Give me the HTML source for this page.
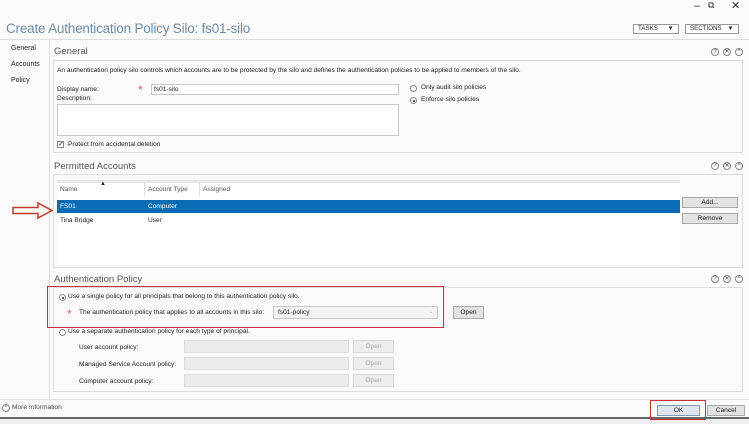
<!DOCTYPE html>
<html><head><meta charset="utf-8"><style>
*{margin:0;padding:0;box-sizing:border-box}
body{width:749px;height:424px;background:#fbfbfb;font-family:"Liberation Sans",sans-serif;font-size:6.6px;color:#222;position:relative;overflow:hidden}
.a{position:absolute;white-space:nowrap}
.box{position:absolute;border:1px solid #dcdcdc;background:#fafafa}
.h{position:absolute;font-size:9.5px;color:#555;white-space:nowrap}
.inp{position:absolute;border:1px solid #c8c8c8;background:#fff}
.btn{position:absolute;border:1px solid #aaa;background:#e2e2e2;text-align:center;font-size:6.6px;line-height:10px}
.dis{background:#ededed;border-color:#d8d8d8;color:#aaa}
.ic{position:absolute;width:8px;height:8px;border:1px solid #888;border-radius:50%;font-size:6px;line-height:6px;text-align:center;color:#444}
.rad{position:absolute;width:7px;height:7px;border:1px solid #888;border-radius:50%;background:#fff}
.rad.on::after{content:"";position:absolute;left:1.5px;top:1.5px;width:2px;height:2px;border-radius:50%;background:#222}
.star{position:absolute;color:#e06070;font-size:12px;line-height:10px}
</style></head><body>
<div class="a" style="left:694px;top:0;font-size:11px;color:#333">–</div>
<div class="a" style="left:708px;top:0;font-size:9px;color:#333">⧉</div>
<div class="a" style="left:731px;top:-1px;font-size:11px;color:#333">✕</div>
<div class="a" style="left:6px;top:21px;font-size:13.5px;color:#6f8ba3;letter-spacing:-0.2px">Create Authentication Policy Silo: fs01-silo</div>
<div class="btn" style="left:633px;top:24px;width:46px;height:10px;background:#fff;border-color:#999;text-align:left;padding-left:4px;font-size:6.2px;line-height:8px">TASKS <span style="margin-left:8px">▼</span></div>
<div class="btn" style="left:685px;top:24px;width:54px;height:10px;background:#fff;border-color:#999;text-align:left;padding-left:4px;font-size:6.2px;line-height:8px">SECTIONS <span style="margin-left:4px">▼</span></div>
<div class="a" style="left:0;top:39px;width:749px;height:1px;background:#ddd"></div>
<div class="a" style="left:49px;top:40px;width:1px;height:360px;background:#ddd"></div>
<div class="a" style="left:11px;top:45px;font-size:7px">General</div>
<div class="a" style="left:11px;top:61px;font-size:7px">Accounts</div>
<div class="a" style="left:11px;top:77px;font-size:7px">Policy</div>

<div class="h" style="left:54px;top:46px">General</div>
<div class="ic" style="left:711px;top:48px">?</div><div class="ic" style="left:723px;top:48px">✕</div><div class="ic" style="left:735px;top:48px">^</div>
<div class="box" style="left:53px;top:60px;width:690px;height:93px"></div>
<div class="a" style="left:57px;top:67px">An authentication policy silo controls which accounts are to be protected by the silo and defines the authentication policies to be applied to members of the silo.</div>
<div class="a" style="left:57px;top:86px">Display name:</div>
<div class="star" style="left:138px;top:85px">*</div>
<div class="inp" style="left:151px;top:84px;width:248px;height:11px;padding-left:2px;line-height:9px">fs01-silo</div>
<div class="a" style="left:57px;top:95px">Description:</div>
<div class="inp" style="left:57px;top:104px;width:342px;height:32px"></div>
<div class="a" style="left:57px;top:141px;width:7px;height:7px;border:1px solid #888;background:#fff;font-size:7px;line-height:5px">✓</div>
<div class="a" style="left:68px;top:141px">Protect from accidental deletion</div>
<div class="rad" style="left:410px;top:85px"></div><div class="a" style="left:421px;top:84px">Only audit silo policies</div>
<div class="rad on" style="left:410px;top:97px"></div><div class="a" style="left:421px;top:96px">Enforce silo policies</div>

<div class="h" style="left:54px;top:161px">Permitted Accounts</div>
<div class="ic" style="left:711px;top:162px">?</div><div class="ic" style="left:723px;top:162px">✕</div><div class="ic" style="left:735px;top:162px">^</div>
<div class="box" style="left:53px;top:174px;width:690px;height:94px"></div>
<div class="a" style="left:57px;top:180px;width:623px;height:85px;background:#fff"></div>
<div class="a" style="left:57px;top:180px;width:623px;height:3px;background:#e8e8e8"></div>
<div class="a" style="left:100px;top:181px;font-size:6px">▲</div>
<div class="a" style="left:60px;top:186px;color:#555">Name</div>
<div class="a" style="left:144px;top:183px;width:1px;height:13px;background:#ddd"></div>
<div class="a" style="left:148px;top:186px;color:#555">Account Type</div>
<div class="a" style="left:199px;top:183px;width:1px;height:13px;background:#ddd"></div>
<div class="a" style="left:203px;top:186px;color:#555">Assigned</div>
<div class="a" style="left:57px;top:200px;width:623px;height:13px;background:#0a6cb5"></div>
<div class="a" style="left:60px;top:203px;color:#fff">FS01</div>
<div class="a" style="left:148px;top:203px;color:#fff">Computer</div>
<div class="a" style="left:60px;top:217px">Tina Bridge</div>
<div class="a" style="left:148px;top:217px">User</div>
<div class="btn" style="left:682px;top:197px;width:56px;height:11px">Add...</div>
<div class="btn" style="left:682px;top:213px;width:56px;height:11px">Remove</div>
<svg class="a" style="left:12px;top:202px" width="42" height="17"><path d="M1 5.5H26V1L40 8.5L26 16V11.5H1Z" fill="none" stroke="#c0392b" stroke-width="1.5"/></svg>

<div class="h" style="left:54px;top:274px">Authentication Policy</div>
<div class="ic" style="left:711px;top:275px">?</div><div class="ic" style="left:723px;top:275px">✕</div><div class="ic" style="left:735px;top:275px">^</div>
<div class="box" style="left:53px;top:287px;width:690px;height:105px"></div>
<div class="a" style="left:47px;top:286px;width:397px;height:42px;border:1.5px solid #c8303c"></div>
<div class="rad on" style="left:59px;top:294px"></div><div class="a" style="left:68px;top:293px">Use a single policy for all principals that belong to this authentication policy silo.</div>
<div class="star" style="left:67px;top:309px">*</div>
<div class="a" style="left:79px;top:309px">The authentication policy that applies to all accounts in this silo:</div>
<div class="inp" style="left:273px;top:306px;width:165px;height:13px;background:#f3f3f3;padding-left:4px;line-height:11px">fs01-policy<span style="position:absolute;right:4px;color:#999;font-size:5px">⌄</span></div>
<div class="btn" style="left:453px;top:306px;width:31px;height:13px;line-height:11px">Open</div>
<div class="rad" style="left:59px;top:329px"></div><div class="a" style="left:68px;top:328px">Use a separate authentication policy for each type of principal.</div>
<div class="a" style="left:79px;top:344px">User account policy:</div>
<div class="a" style="left:79px;top:361px">Managed Service Account policy:</div>
<div class="a" style="left:79px;top:378px">Computer account policy:</div>
<div class="inp" style="left:184px;top:340px;width:165px;height:13px;background:#ebebeb;border-color:#ddd"></div>
<div class="inp" style="left:184px;top:357px;width:165px;height:13px;background:#ebebeb;border-color:#ddd"></div>
<div class="inp" style="left:184px;top:374px;width:165px;height:13px;background:#ebebeb;border-color:#ddd"></div>
<div class="btn dis" style="left:353px;top:340px;width:41px;height:13px;line-height:11px">Open</div>
<div class="btn dis" style="left:353px;top:357px;width:41px;height:13px;line-height:11px">Open</div>
<div class="btn dis" style="left:353px;top:374px;width:41px;height:13px;line-height:11px">Open</div>

<div class="a" style="left:0;top:399px;width:749px;height:1px;background:#e2e2e2"></div>
<div class="ic" style="left:2px;top:404px;width:8px;height:8px;font-size:5px">^</div>
<div class="a" style="left:12px;top:404px;color:#444">More Information</div>
<div class="a" style="left:0;top:417px;width:749px;height:2px;background:#666"></div>
<div class="a" style="left:0;top:419px;width:749px;height:5px;background:#eee"></div>
<div class="btn" style="left:657px;top:405px;width:43px;height:11px;background:#dde6ef;border-color:#7a9ab8">OK</div>
<div class="a" style="left:650px;top:400px;width:56px;height:20px;border:1.5px solid #c8303c"></div>
<div class="btn" style="left:707px;top:405px;width:38px;height:11px">Cancel</div>
</body></html>
